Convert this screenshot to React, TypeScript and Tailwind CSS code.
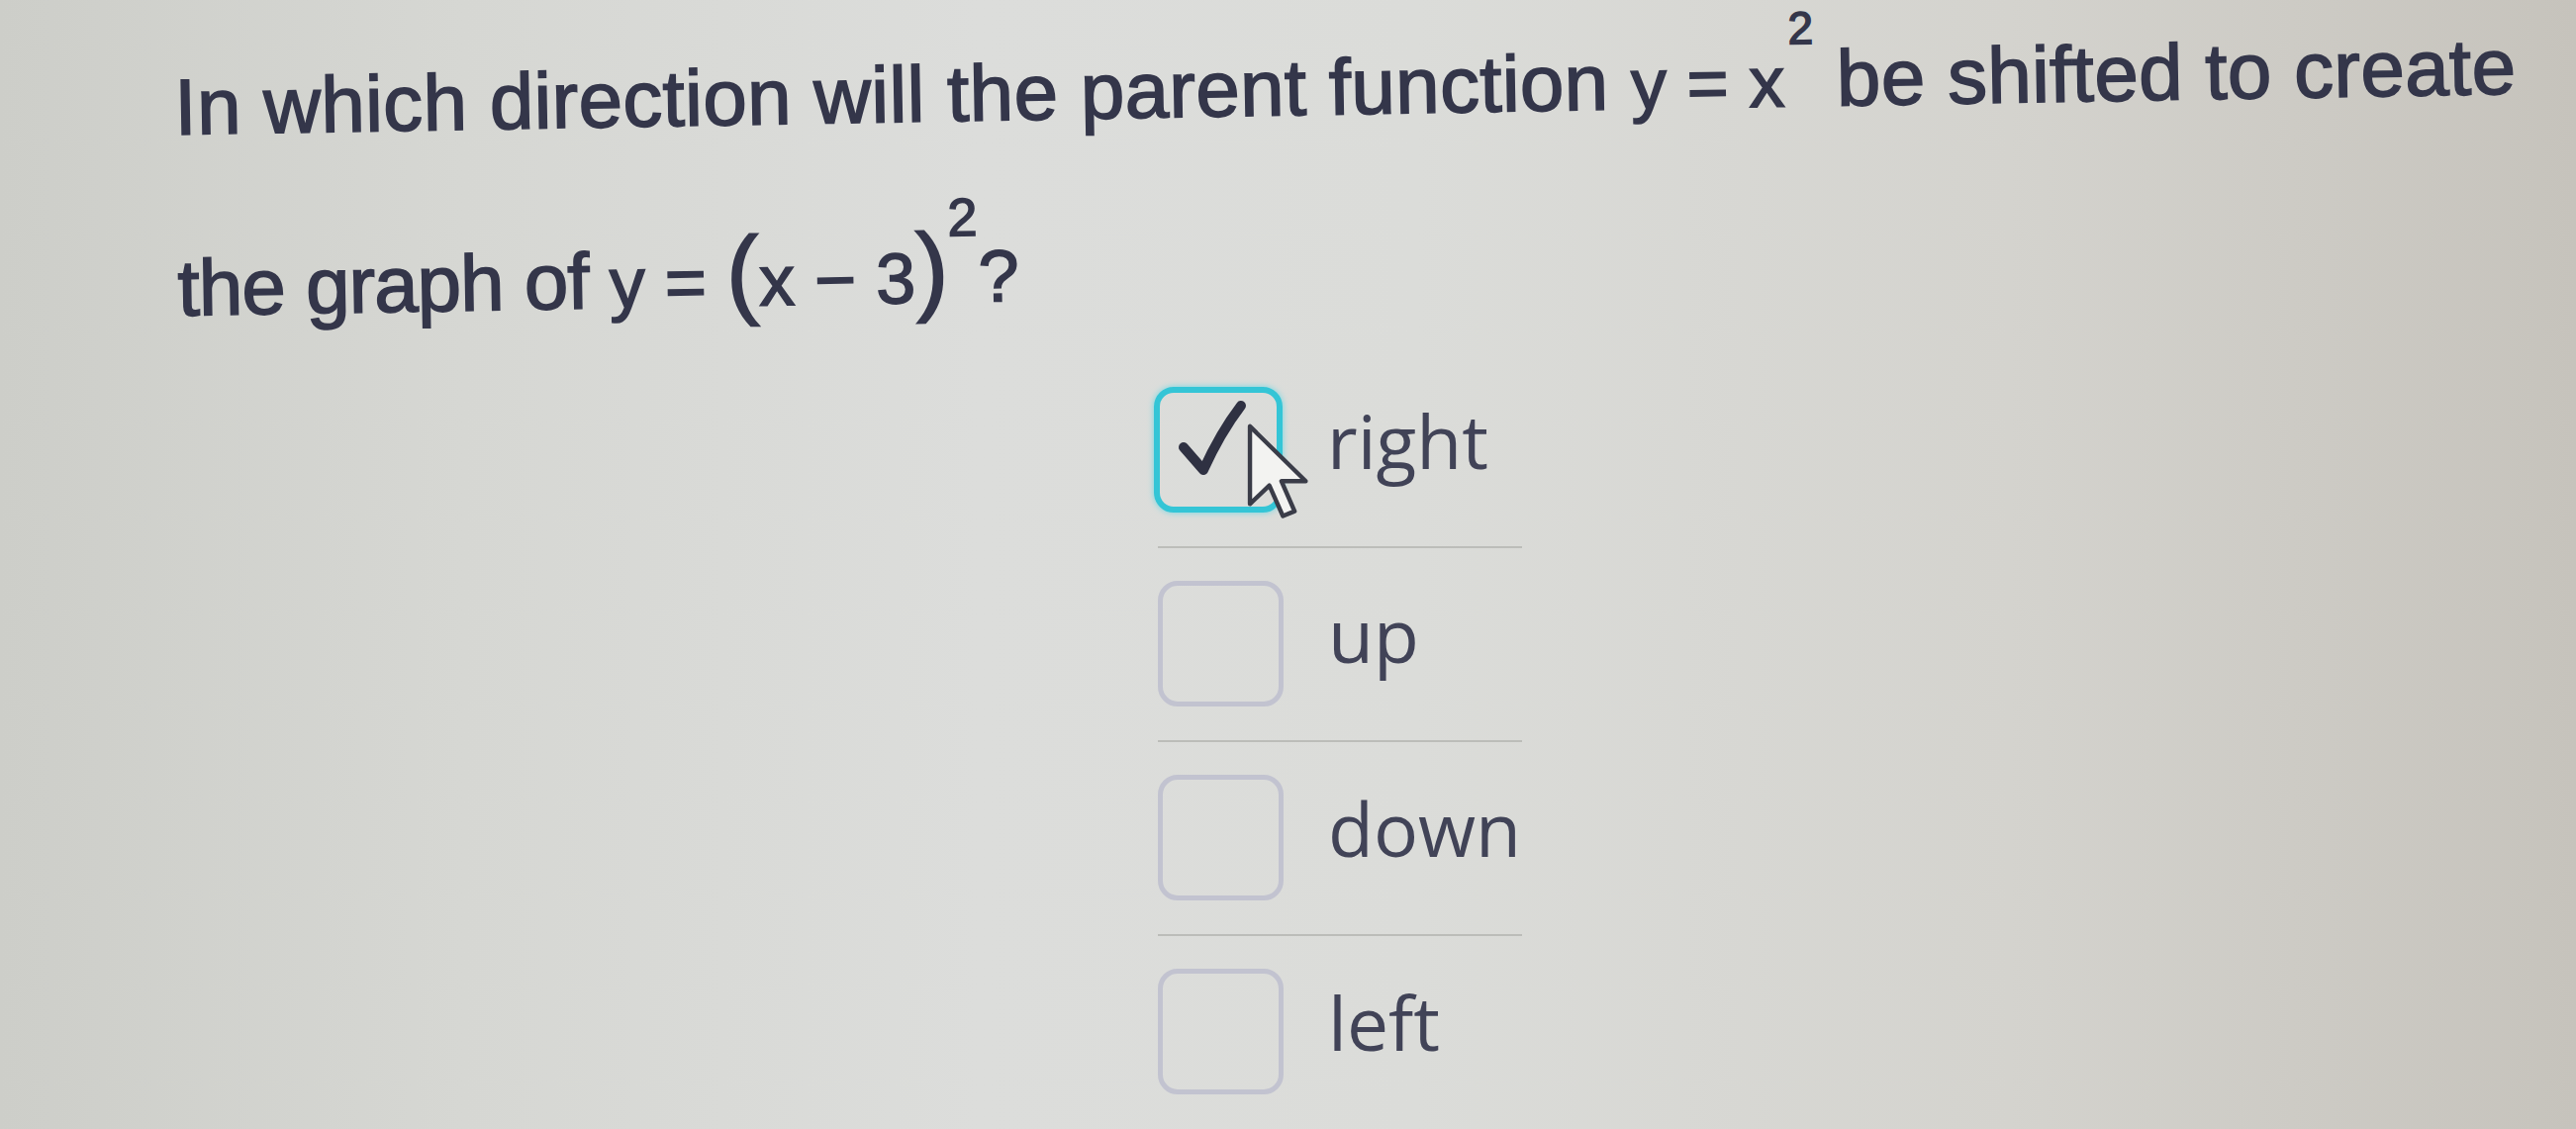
import React from "react";

type Opt = { label: string; checked?: boolean };

const options: Opt[] = [
  { label: "right", checked: true },
  { label: "up" },
  { label: "down" },
  { label: "left" },
];

function Cursor() {
  return (
    <svg
      className="absolute left-[92px] top-[35px]"
      width="64"
      height="98"
      viewBox="0 0 13 20"
    >
      <path
        d="M1 1 L1 17 L5 13.2 L7.8 19.5 L10.2 18.5 L7.5 12.3 L12.5 12.3 Z"
        fill="#f3f3f1"
        stroke="#3a3c48"
        strokeWidth="0.9"
        strokeLinejoin="round"
      />
    </svg>
  );
}

function Box({ checked }: { checked?: boolean }) {
  if (checked) {
    return (
      <div className="relative shrink-0 w-[130px] h-[127px] -ml-[4px]">
        <div className="w-full h-full rounded-[20px] border-[6px] border-[#34c5d6] shadow-[0_0_6px_#6fd8e4]" />
        <svg className="absolute left-0 top-0" width="130" height="127" viewBox="0 0 130 127">
          <path
            d="M30 61 L50 84 C60 62 72 40 88 19"
            fill="none"
            stroke="#2f3142"
            strokeWidth="10"
            strokeLinecap="round"
            strokeLinejoin="round"
          />
        </svg>
        <Cursor />
      </div>
    );
  }
  return (
    <div className="shrink-0 w-[127px] h-[127px] rounded-[20px] border-[5px] border-[#c2c3d0]" />
  );
}

export default function App() {
  return (
    <div className="relative w-[2603px] h-[1141px] overflow-hidden bg-[linear-gradient(90deg,#cdcec9_0%,#d6d7d3_18%,#dcdddb_38%,#dbdcd9_55%,#d4d3ce_78%,#c6c3bc_100%)]">
      <div className="pl-[178px] pt-[69px]">
        <div className="-rotate-1 origin-left font-['Liberation_Sans',Arial,sans-serif] text-[80px] leading-[80px] text-[#34364a] [-webkit-text-stroke:1.6px_#34364a] whitespace-nowrap">
          <div className="tracking-[0.3px]">
            In which direction will the parent function{" "}
            <span className="text-[72px]">y = x</span>
            <span className="relative -top-[63px] ml-[4px] text-[46px] leading-[0]">2</span>{" "}
            be shifted to create
          </div>
          <div className="mt-[101px]">
            <span className="tracking-[-1px]">the graph of </span>
            <span className="text-[72px]">
              y = <span className="text-[100px] leading-[0]">(</span>x − 3
              <span className="text-[100px] leading-[0]">)</span>
            </span>
            <span className="relative -top-[67px] text-[54px] leading-[0]">2</span>
            <span className="text-[74px]">?</span>
          </div>
        </div>

        <div className="ml-[992px] mt-[24px] w-[368px] font-['Open_Sans','Noto_Sans',sans-serif] font-medium text-[#414357]">
          {options.map((o, i) => (
            <div
              key={o.label}
              className={
                i < options.length - 1
                  ? "flex items-center pt-[33px] pb-[34px] border-b-2 border-[#bcbdb9]"
                  : "flex items-center pt-[33px] pb-[34px]"
              }
            >
              <Box checked={o.checked} />
              <span className="ml-[45px] text-[75px] leading-none pb-[18px]">{o.label}</span>
            </div>
          ))}
        </div>
      </div>
    </div>
  );
}
